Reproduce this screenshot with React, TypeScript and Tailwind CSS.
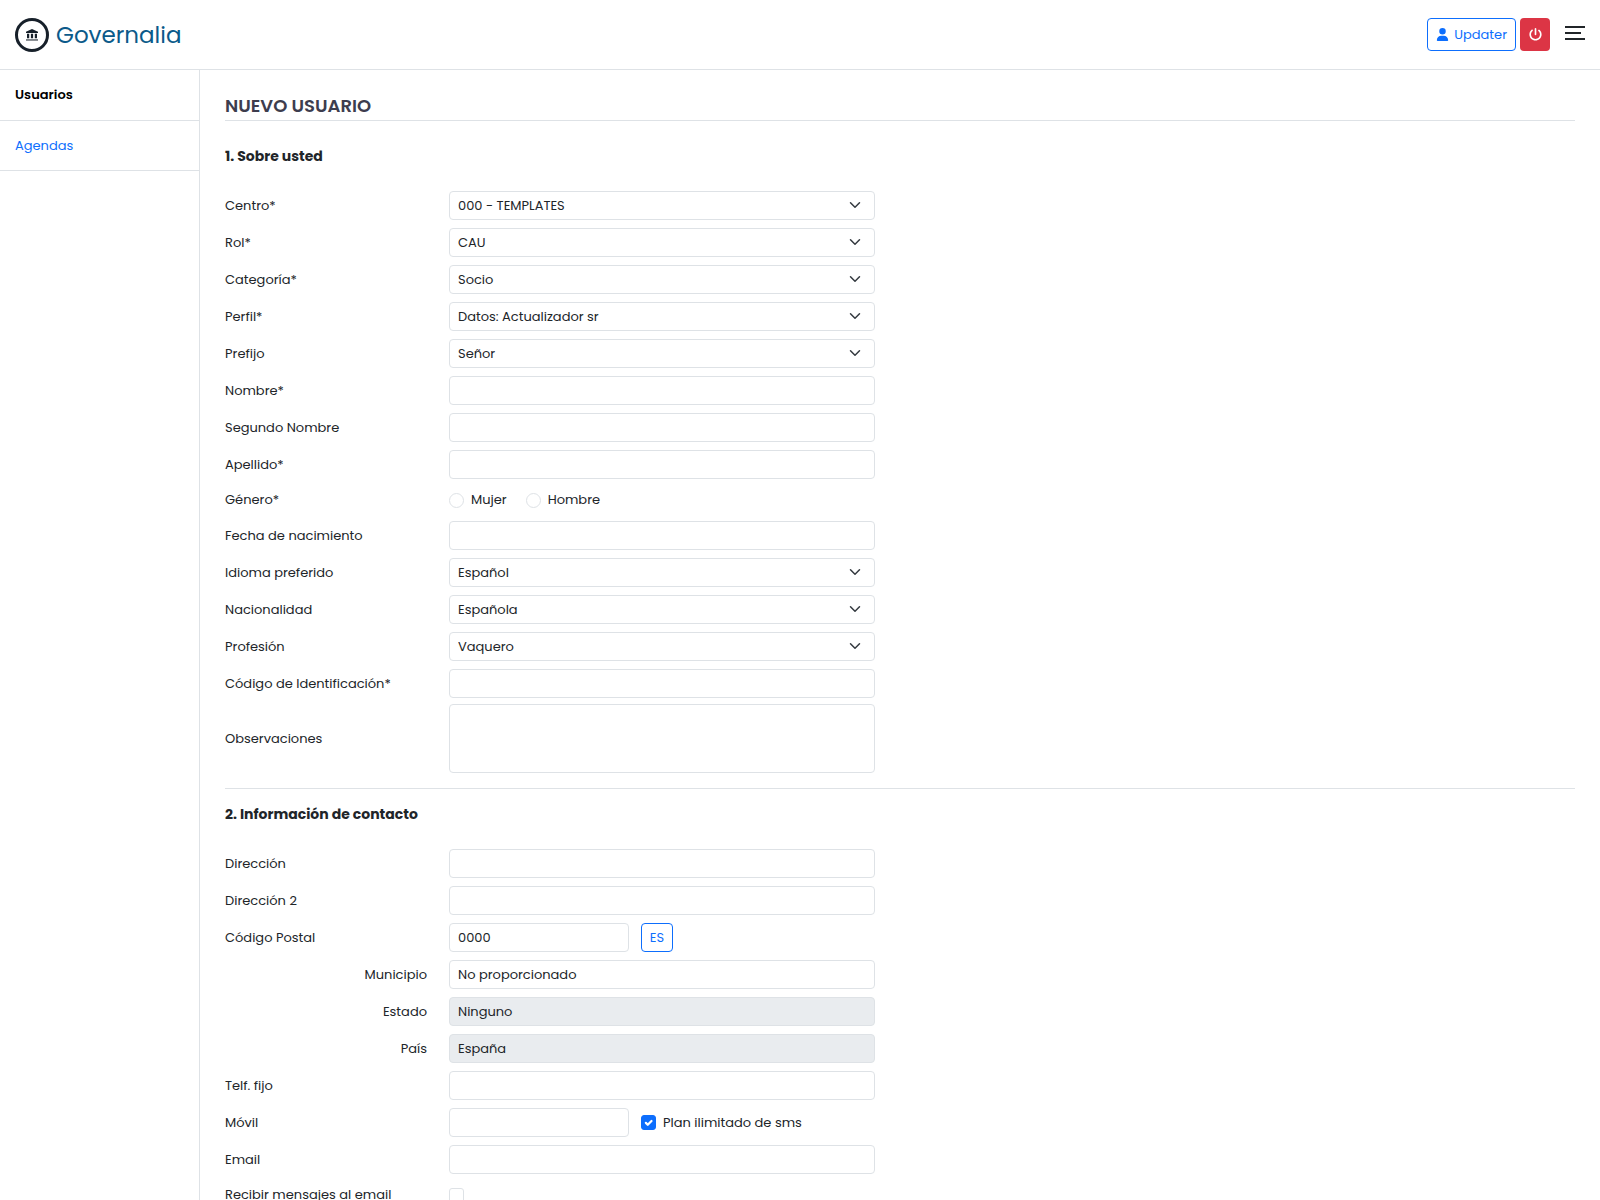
import React from 'react';
import { FaPowerOff, FaUser } from 'react-icons/fa6';

const controlClass =
  'block w-full h-[29px] rounded border border-[#dee2e6] bg-white px-2 text-[#212529] outline-none focus:border-[#86b7fe] disabled:bg-[#e9ecef] disabled:opacity-100';

interface RowProps {
  label: string;
  htmlFor?: string;
  right?: boolean;
  children: React.ReactNode;
}

const Row: React.FC<RowProps> = ({ label, htmlFor, right, children }) => (
  <div className="flex items-center">
    <div className={right ? 'w-[202px] mr-[22px] shrink-0 text-right' : 'w-[224px] shrink-0'}>
      <label htmlFor={htmlFor}>{label}</label>
    </div>
    <div className="w-full max-w-[426px]">{children}</div>
  </div>
);

interface FieldProps {
  id: string;
  label: string;
  value?: string;
  right?: boolean;
  disabled?: boolean;
}

const TextField: React.FC<FieldProps> = ({ id, label, value, right, disabled }) => (
  <Row label={label} htmlFor={id} right={right}>
    <input id={id} type="text" defaultValue={value} disabled={disabled} className={controlClass} />
  </Row>
);

const SelectField: React.FC<FieldProps> = ({ id, label, value }) => (
  <Row label={label} htmlFor={id}>
    <div className="relative">
      <select id={id} className={`${controlClass} appearance-none`}>
        <option>{value}</option>
      </select>
      <svg
        className="pointer-events-none absolute right-[14px] top-2 size-3"
        viewBox="0 0 16 16"
        fill="none"
        stroke="#343a40"
        strokeWidth="2"
        strokeLinecap="round"
        strokeLinejoin="round"
      >
        <path d="m2 5 6 6 6-6" />
      </svg>
    </div>
  </Row>
);

const Checkbox: React.FC<{ id: string; checked?: boolean }> = ({ id, checked }) => (
  <span className="relative inline-flex size-[15px] shrink-0">
    <input
      id={id}
      type="checkbox"
      defaultChecked={checked}
      className="peer size-[15px] appearance-none rounded-[3px] border border-[#dee2e6] bg-white checked:border-[#0d6efd] checked:bg-[#0d6efd]"
    />
    <svg
      className="pointer-events-none absolute inset-0 hidden size-[15px] peer-checked:block"
      viewBox="0 0 20 20"
      fill="none"
      stroke="#fff"
      strokeWidth="3"
      strokeLinecap="round"
      strokeLinejoin="round"
    >
      <path d="m6.5 10.5 2.5 2.5 5-5" />
    </svg>
  </span>
);

const Radio: React.FC<{ id: string; label: string }> = ({ id, label }) => (
  <span className="flex items-center gap-[7px]">
    <input
      id={id}
      type="radio"
      name="genero"
      className="size-[15px] appearance-none rounded-full border border-[#dee2e6] bg-white checked:border-4 checked:border-[#0d6efd]"
    />
    <label htmlFor={id}>{label}</label>
  </span>
);

const BankIcon: React.FC = () => (
  <svg className="size-3" viewBox="0 0 12 12" fill="currentColor">
    <path d="M6 0 12 2.8V4H0V2.8Z" />
    <path d="M1 4.8h2.2v4.4H1zM4.9 4.8h2.2v4.4H4.9zM8.8 4.8H11v4.4H8.8z" />
    <path d="M0 10.2h12v1.5H0z" opacity="0.7" />
  </svg>
);

const Header: React.FC = () => (
  <header className="flex h-[70px] items-center justify-between border-b border-[#dee2e6] px-[15px]">
    <a href="#" className="flex items-center gap-[7px]">
      <span className="flex size-[34px] items-center justify-center rounded-full border-3 border-[#17202a] text-[#17202a]">
        <BankIcon />
      </span>
      <span className="text-[23px] text-[#0b5a8a]">Governalia</span>
    </a>
    <div className="flex items-center">
      <button
        type="button"
        className="flex h-[33px] items-center gap-[5px] rounded border border-[#0d6efd] px-2 text-[#0d6efd]"
      >
        <FaUser className="size-[13px]" />
        Updater
      </button>
      <button
        type="button"
        aria-label="Salir"
        className="ml-1 flex h-[33px] w-[30px] items-center justify-center rounded bg-[#dc3545] text-white"
      >
        <FaPowerOff className="size-[13px]" />
      </button>
      <button type="button" aria-label="Menú" className="mb-[3px] ml-[15px] flex w-5 flex-col gap-1">
        <span className="h-[2px] w-5 bg-[#212529]" />
        <span className="h-[2px] w-4 bg-[#212529]" />
        <span className="h-[2px] w-5 bg-[#212529]" />
      </button>
    </div>
  </header>
);

const App: React.FC = () => {
  return (
    <div className="flex min-h-screen flex-col bg-white font-[Poppins,Inter,sans-serif] text-[13px] leading-5 text-[#212529]">
      <Header />
      <div className="flex flex-1">
        <nav className="w-[200px] shrink-0 border-r border-[#dee2e6]">
          <a href="#" className="flex h-[51px] items-center border-b border-[#dee2e6] px-[15px] font-semibold text-black">
            Usuarios
          </a>
          <a href="#" className="flex h-[50px] items-center border-b border-[#dee2e6] px-[15px] text-[#0d6efd]">
            Agendas
          </a>
        </nav>

        <main className="flex-1 px-[25px] pt-[23px]">
          <h1 className="border-b border-[#dee2e6] pb-px text-lg leading-[26px] font-semibold text-[#3d3d4e]">
            NUEVO USUARIO
          </h1>

          <form>
            <section className="border-b border-[#dee2e6] pb-[15px]">
              <h2 className="my-[25px] text-sm font-bold">1. Sobre usted</h2>
              <div className="flex flex-col gap-2">
                <SelectField id="centro" label="Centro*" value="000 - TEMPLATES" />
                <SelectField id="rol" label="Rol*" value="CAU" />
                <SelectField id="categoria" label="Categoría*" value="Socio" />
                <SelectField id="perfil" label="Perfil*" value="Datos: Actualizador sr" />
                <SelectField id="prefijo" label="Prefijo" value="Señor" />
                <TextField id="nombre" label="Nombre*" />
                <TextField id="segundo" label="Segundo Nombre" />
                <TextField id="apellido" label="Apellido*" />
                <Row label="Género*" htmlFor="mujer">
                  <div className="flex h-[26px] items-center gap-[19px]">
                    <Radio id="mujer" label="Mujer" />
                    <Radio id="hombre" label="Hombre" />
                  </div>
                </Row>
                <TextField id="fecha" label="Fecha de nacimiento" />
                <SelectField id="idioma" label="Idioma preferido" value="Español" />
                <SelectField id="nacionalidad" label="Nacionalidad" value="Española" />
                <SelectField id="profesion" label="Profesión" value="Vaquero" />
                <div className="flex flex-col gap-1.5">
                  <TextField id="codigo" label="Código de Identificación*" />
                  <Row label="Observaciones" htmlFor="observaciones">
                    <textarea
                      id="observaciones"
                      className="block h-[69px] w-full resize-none rounded border border-[#dee2e6] px-2 py-1 outline-none"
                    />
                  </Row>
                </div>
              </div>
            </section>

            <section>
              <h2 className="mt-[15px] mb-[25px] text-sm font-bold">2. Información de contacto</h2>
              <div className="flex flex-col gap-2">
                <TextField id="direccion" label="Dirección" />
                <TextField id="direccion2" label="Dirección 2" />
                <Row label="Código Postal" htmlFor="postal">
                  <div className="flex gap-3">
                    <div className="w-[180px]">
                      <input id="postal" type="text" defaultValue="0000" className={controlClass} />
                    </div>
                    <button type="button" className="h-[29px] w-8 rounded border border-[#0d6efd] text-[#0d6efd]">
                      ES
                    </button>
                  </div>
                </Row>
                <TextField id="municipio" label="Municipio" value="No proporcionado" right />
                <TextField id="estado" label="Estado" value="Ninguno" right disabled />
                <TextField id="pais" label="País" value="España" right disabled />
                <TextField id="telefono" label="Telf. fijo" />
                <Row label="Móvil" htmlFor="movil">
                  <div className="flex items-center gap-3">
                    <div className="w-[180px]">
                      <input id="movil" type="text" className={controlClass} />
                    </div>
                    <div className="flex items-center gap-[7px]">
                      <Checkbox id="sms" checked />
                      <label htmlFor="sms">Plan ilimitado de sms</label>
                    </div>
                  </div>
                </Row>
                <TextField id="email" label="Email" />
                <Row label="Recibir mensajes al email" htmlFor="recibir">
                  <div className="flex h-[26px] items-center">
                    <Checkbox id="recibir" />
                  </div>
                </Row>
              </div>
            </section>
          </form>
        </main>
      </div>
    </div>
  );
};

export default App;
